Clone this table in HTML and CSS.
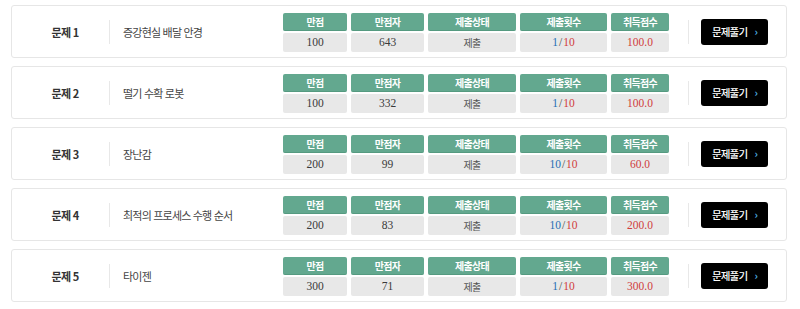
FILE: index.html
```html
<!DOCTYPE html>
<html lang="ko">
<head>
<meta charset="utf-8">
<link rel="stylesheet" href="styles.css">
</head>
<body>
<div class="list">
  <div class="card">
    <div class="label">문제 1</div>
    <div class="title">증강현실 배달 안경</div>
    <div class="stats">
      <div class="h">만점</div><div class="h">만점자</div><div class="h">제출상태</div><div class="h">제출횟수</div><div class="h">취득점수</div>
      <div class="v">100</div><div class="v">643</div><div class="v ko">제출</div><div class="v"><span class="blue">1</span><span class="sl">/</span><span class="red">10</span></div><div class="v red">100.0</div>
    </div>
    <div class="action"><button class="btn">문제풀기 <span class="chev">›</span></button></div>
  </div>
  <div class="card">
    <div class="label">문제 2</div>
    <div class="title">떨기 수확 로봇</div>
    <div class="stats">
      <div class="h">만점</div><div class="h">만점자</div><div class="h">제출상태</div><div class="h">제출횟수</div><div class="h">취득점수</div>
      <div class="v">100</div><div class="v">332</div><div class="v ko">제출</div><div class="v"><span class="blue">1</span><span class="sl">/</span><span class="red">10</span></div><div class="v red">100.0</div>
    </div>
    <div class="action"><button class="btn">문제풀기 <span class="chev">›</span></button></div>
  </div>
  <div class="card">
    <div class="label">문제 3</div>
    <div class="title">장난감</div>
    <div class="stats">
      <div class="h">만점</div><div class="h">만점자</div><div class="h">제출상태</div><div class="h">제출횟수</div><div class="h">취득점수</div>
      <div class="v">200</div><div class="v">99</div><div class="v ko">제출</div><div class="v"><span class="blue">10</span><span class="sl">/</span><span class="red">10</span></div><div class="v red">60.0</div>
    </div>
    <div class="action"><button class="btn">문제풀기 <span class="chev">›</span></button></div>
  </div>
  <div class="card">
    <div class="label">문제 4</div>
    <div class="title">최적의 프로세스 수행 순서</div>
    <div class="stats">
      <div class="h">만점</div><div class="h">만점자</div><div class="h">제출상태</div><div class="h">제출횟수</div><div class="h">취득점수</div>
      <div class="v">200</div><div class="v">83</div><div class="v ko">제출</div><div class="v"><span class="blue">10</span><span class="sl">/</span><span class="red">10</span></div><div class="v red">200.0</div>
    </div>
    <div class="action"><button class="btn">문제풀기 <span class="chev">›</span></button></div>
  </div>
  <div class="card">
    <div class="label">문제 5</div>
    <div class="title">타이젠</div>
    <div class="stats">
      <div class="h">만점</div><div class="h">만점자</div><div class="h">제출상태</div><div class="h">제출횟수</div><div class="h">취득점수</div>
      <div class="v">300</div><div class="v">71</div><div class="v ko">제출</div><div class="v"><span class="blue">1</span><span class="sl">/</span><span class="red">10</span></div><div class="v red">300.0</div>
    </div>
    <div class="action"><button class="btn">문제풀기 <span class="chev">›</span></button></div>
  </div>
</div>
</body>
</html>
```
FILE: styles.css
```css
html, body {
  margin: 0;
  padding: 0;
  background: #fff;
}
body {
  font-family: "Noto Sans CJK KR", "Noto Sans", sans-serif;
  color: #333;
}
.list {
  display: flex;
  flex-direction: column;
  gap: 8px;
  padding: 5px 13px 0 11px;
}
.card {
  display: flex;
  align-items: center;
  height: 53px;
  box-sizing: border-box;
  border: 1px solid #e6e6e6;
  border-radius: 3px;
  background: #fff;
}
.label {
  width: 97px;
  box-sizing: border-box;
  padding-left: 9px;
  text-align: center;
  font-size: 11px;
  letter-spacing: -0.7px;
  font-weight: 700;
  color: #333;
}
.title {
  flex: 1;
  height: 24px;
  line-height: 24px;
  border-left: 1px solid #e8e8e8;
  padding-left: 13px;
  font-size: 11px;
  letter-spacing: -0.8px;
  color: #444;
}
.stats {
  display: grid;
  grid-template-columns: 64px 73px 88px 87px 58px;
  grid-template-rows: 18px 19px;
  column-gap: 4px;
  row-gap: 2px;
  margin-top: 1px;
}
.h {
  background: #63a88f;
  border-bottom: 1px solid #559a80;
  box-sizing: border-box;
  border-radius: 2px;
  color: #fff;
  font-size: 10px;
  letter-spacing: -0.7px;
  font-weight: 700;
  text-align: center;
  line-height: 17px;
}
.v {
  background: #e8e8e8;
  border-radius: 2px;
  text-align: center;
  font-family: "Liberation Serif", "Noto Sans CJK KR", serif;
  font-size: 11.5px;
  line-height: 19px;
  color: #3a3a3a;
}
.v.ko {
  font-family: "Noto Sans CJK KR", sans-serif;
  font-size: 10px;
  letter-spacing: -0.7px;
  color: #555;
}
.sl {
  margin: 0 1px;
  color: #444;
}
.blue { color: #1f6fb4; }
.red { color: #d03c3c; }
.action {
  margin-left: 19px;
  height: 24px;
  border-left: 1px solid #e8e8e8;
  padding-left: 12px;
  padding-right: 18px;
  display: flex;
  align-items: center;
}
.btn {
  width: 67px;
  height: 26px;
  background: #000;
  color: #fff;
  border: none;
  border-radius: 3px;
  font-family: "Noto Sans CJK KR", sans-serif;
  font-size: 10.5px;
  font-weight: 500;
  letter-spacing: -0.8px;
  padding: 0 0 1px 0;
  cursor: pointer;
}
.chev {
  color: #4fb0e0;
  font-weight: 700;
  margin-left: 5px;
}
```
